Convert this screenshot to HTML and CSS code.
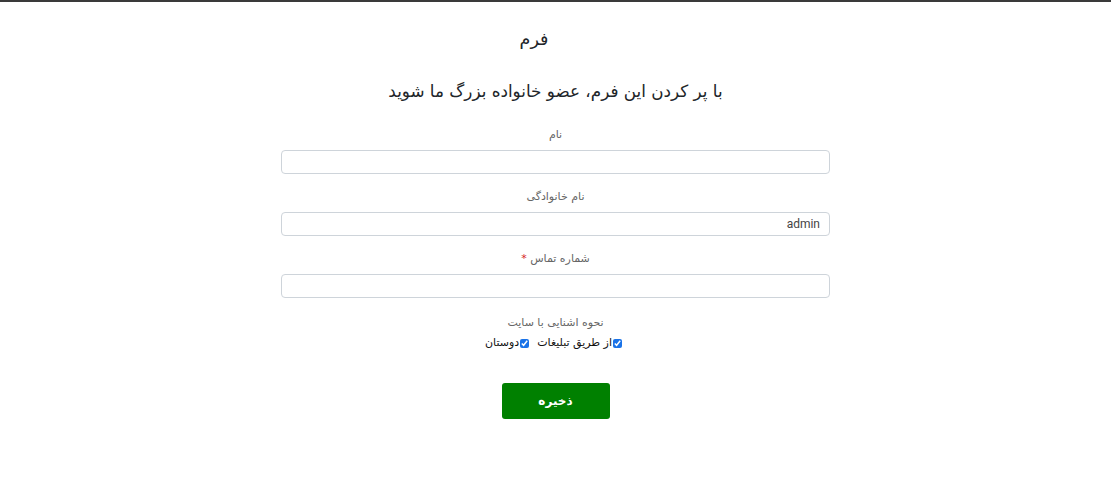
FILE: index.html
```html
<!DOCTYPE html>
<html lang="fa" dir="rtl">
<head>
<meta charset="utf-8">
<title>فرم</title>
<link rel="stylesheet" href="styles.css">
</head>
<body>
<div class="topline"></div>
<main class="page">
  <h1 class="title">فرم</h1>
  <h2 class="subtitle">با پر کردن این فرم، عضو خانواده بزرگ ما شوید</h2>
  <form class="form">
    <div class="group">
      <label class="label">نام</label>
      <input class="input" type="text">
    </div>
    <div class="group">
      <label class="label">نام خانوادگی</label>
      <input class="input" type="text" value="admin">
    </div>
    <div class="group">
      <label class="label">شماره تماس <span class="req">*</span></label>
      <input class="input" type="text">
    </div>
    <div class="group group-checks">
      <label class="label">نحوه اشنایی با سایت</label>
      <div class="checks">
        <label class="check"><input type="checkbox" checked>از طریق تبلیغات</label>
        <label class="check"><input type="checkbox" checked>دوستان</label>
      </div>
    </div>
    <div class="actions">
      <button class="btn" type="button">ذخیره</button>
    </div>
  </form>
</main>
</body>
</html>
```
FILE: styles.css
```css
html, body {
  margin: 0;
  padding: 0;
  background: #fff;
}
body {
  font-family: "DejaVu Sans", "Noto Sans", sans-serif;
  color: #212529;
}
.topline {
  height: 2px;
  background: #3a3a3a;
}
.page {
  width: 549px;
  margin: 0 auto;
  display: flex;
  flex-direction: column;
  align-items: stretch;
}
.title {
  margin: 24px 0 0;
  font-size: 17.5px;
  font-weight: normal;
  text-align: center;
  line-height: 26px;
  padding-right: 43px;
}
.subtitle {
  margin: 26px 0 0;
  font-size: 16.8px;
  font-weight: normal;
  text-align: center;
  line-height: 26px;
}
.form {
  display: flex;
  flex-direction: column;
  margin-top: 22px;
}
.group {
  display: flex;
  flex-direction: column;
  align-items: stretch;
  margin-bottom: 14px;
}
.group-checks {
  margin-top: 2px;
}
.label {
  display: block;
  text-align: center;
  font-size: 11px;
  line-height: 18px;
  color: #666;
  margin-bottom: 6px;
}
.req {
  color: #d61d1d;
}
.input {
  box-sizing: border-box;
  width: 549px;
  height: 24px;
  border: 1px solid #ced4da;
  border-radius: 4px;
  padding: 0 9px;
  font-family: Roboto, "Liberation Sans", sans-serif;
  font-size: 12px;
  color: #444;
  direction: rtl;
  outline: none;
}
.checks {
  display: flex;
  justify-content: center;
  gap: 8px;
  margin-top: -3px;
  padding-right: 4px;
}
.check {
  font-size: 11px;
  line-height: 16px;
  color: #111;
  display: flex;
  align-items: center;
}
.check input {
  width: 9px;
  height: 9px;
  margin: 0 0 0 1px;
  accent-color: #1a73e8;
}
.actions {
  display: flex;
  justify-content: center;
  margin-top: 18px;
}
.btn {
  width: 108px;
  height: 36px;
  border: none;
  border-radius: 3px;
  background: #008000;
  color: #fff;
  font-family: "DejaVu Sans", sans-serif;
  font-weight: bold;
  font-size: 12px;
  cursor: pointer;
}
```
